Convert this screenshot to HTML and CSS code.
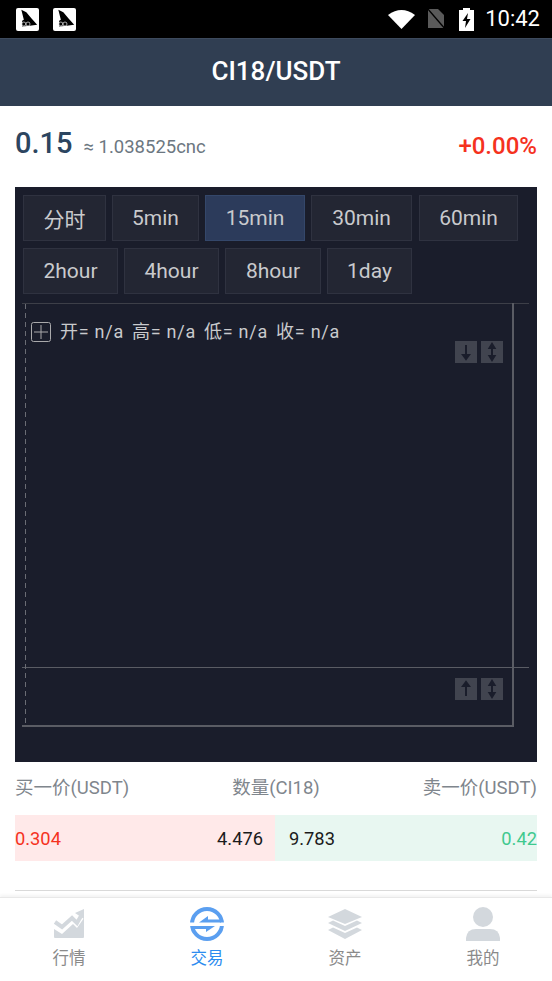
FILE: index.html
```html
<!DOCTYPE html>
<html lang="zh">
<head>
<meta charset="utf-8">
<title>CI18/USDT</title>
<link rel="stylesheet" href="styles.css">
</head>
<body>
<div class="app">
  <div class="status">
    <div class="status-left">
      <span class="note"><svg viewBox="0 0 24 24" width="20" height="20"><path d="M4 1 L10 4 L16 11 L23 19 L14 20 L5 21 L5 14 L7 13 Z" fill="#000"/><circle cx="7" cy="18" r="2.400" fill="#000" stroke="#fff" stroke-width=".8"/><circle cx="12" cy="18" r="2.400" fill="#000" stroke="#fff" stroke-width=".8"/></svg></span>
      <span class="note"><svg viewBox="0 0 24 24" width="20" height="20"><path d="M4 1 L10 4 L16 11 L23 19 L14 20 L5 21 L5 14 L7 13 Z" fill="#000"/><circle cx="7" cy="18" r="2.400" fill="#000" stroke="#fff" stroke-width=".8"/><circle cx="12" cy="18" r="2.400" fill="#000" stroke="#fff" stroke-width=".8"/></svg></span>
    </div>
    <div class="status-right">
      <svg class="wifi" viewBox="0 0 27 20" width="27" height="20"><path d="M0 6 Q13.500 -4 27 6 L13.500 20 Z" fill="#fff"/></svg>
      <svg class="sim" viewBox="0 0 20 22" width="20" height="22"><path d="M1 1 H11 L17 7 V20 H1 Z" fill="#5a5a5a"/><path d="M0 0 L19 22" stroke="#000" stroke-width="1.400"/></svg>
      <svg class="batt" viewBox="0 0 15 24" width="15" height="24"><path d="M4 1 H11 V3 H15 V24 H0 V3 H4 Z" fill="#fff"/><path d="M9 6 L3.500 14 H7 L6 21 L11.500 12 H8 Z" fill="#000"/></svg>
      <span class="clock">10:42</span>
    </div>
  </div>

  <header class="title">CI18/USDT</header>

  <section class="price-row">
    <div class="price-left">
      <span class="price">0.15</span>
      <span class="approx">≈ 1.038525cnc</span>
    </div>
    <span class="change">+0.00%</span>
  </section>

  <section class="chart">
    <div class="periods">
      <div class="period-row">
        <button class="btn w-fen">分时</button>
        <button class="btn w-5">5min</button>
        <button class="btn w-15 active">15min</button>
        <button class="btn w-30">30min</button>
        <button class="btn w-60">60min</button>
      </div>
      <div class="period-row">
        <button class="btn w-h">2hour</button>
        <button class="btn w-h">4hour</button>
        <button class="btn w-h8">8hour</button>
        <button class="btn w-d">1day</button>
      </div>
    </div>
    <div class="plot">
      <div class="line top-line"></div>
      <div class="line mid-line"></div>
      <div class="line bottom-line"></div>
      <div class="line right-line"></div>
      <div class="line dash-line"></div>
      <div class="legend">
        <svg class="plus" viewBox="0 0 20 20" width="20" height="20"><rect x=".5" y=".5" width="19" height="19" rx="2" fill="none" stroke="#a9a9ab"/><path d="M10 3 V17 M3 10 H17" stroke="#a9a9ab"/></svg>
        <span class="legend-text">开= n/a</span>
        <span class="legend-text">高= n/a</span>
        <span class="legend-text">低= n/a</span>
        <span class="legend-text">收= n/a</span>
      </div>
      <div class="zoom zoom-top">
        <span class="zbtn"><svg viewBox="0 0 22 22" width="22" height="22"><path d="M11 4 V15 M8 14 L11 18 L14 14 Z" stroke="#1a1d2b" stroke-width="2" fill="#1a1d2b"/></svg></span>
        <span class="zbtn"><svg viewBox="0 0 22 22" width="22" height="22"><path d="M11 5 V17 M8.500 7 L11 3 L13.500 7 Z M8.500 15 L11 19 L13.500 15 Z" stroke="#1a1d2b" stroke-width="2" fill="#1a1d2b"/></svg></span>
      </div>
      <div class="zoom zoom-bottom">
        <span class="zbtn"><svg viewBox="0 0 22 22" width="22" height="22"><path d="M11 7 V18 M8 8 L11 4 L14 8 Z" stroke="#1a1d2b" stroke-width="2" fill="#1a1d2b"/></svg></span>
        <span class="zbtn"><svg viewBox="0 0 22 22" width="22" height="22"><path d="M11 5 V17 M8.500 7 L11 3 L13.500 7 Z M8.500 15 L11 19 L13.500 15 Z" stroke="#1a1d2b" stroke-width="2" fill="#1a1d2b"/></svg></span>
      </div>
    </div>
  </section>

  <section class="book-head">
    <span>买一价(USDT)</span>
    <span>数量(CI18)</span>
    <span>卖一价(USDT)</span>
  </section>

  <section class="book">
    <div class="bid"><span class="bid-price">0.304</span><span>4.476</span></div>
    <div class="ask"><span>9.783</span><span class="ask-price">0.42</span></div>
  </section>

  <div class="divider"></div>

  <nav class="tabs">
    <div class="tab">
      <svg viewBox="0 0 34 34" width="34" height="34"><path d="M3 15 L10 20 L20 11 L25 16 L29 9" fill="none" stroke="#d3d8dd" stroke-width="4"/><path d="M23 6 L32 2 L32 12 Z" fill="#d3d8dd"/><path d="M2 22 L10 27 L21 17 L25 21 L32 11 V30 Q32 31 31 31 H3 Q2 31 2 30 Z" fill="#d3d8dd"/></svg>
      <span>行情</span>
    </div>
    <div class="tab on">
      <svg viewBox="0 0 34 34" width="34" height="34"><circle cx="17" cy="17" r="15" fill="none" stroke="#5b9ff0" stroke-width="4"/><rect x="0" y="15.500" width="34" height="3.500" fill="#fff"/><path d="M9 15.500 L18 9 V12.500 H31 V15.500 Z" fill="#5b9ff0"/><path d="M25 19 L16 25 V22 H3 V19 Z" fill="#5b9ff0"/></svg>
      <span>交易</span>
    </div>
    <div class="tab">
      <svg viewBox="0 0 34 34" width="34" height="34"><path d="M17 2 L34 10 L17 17 L0 10 Z" fill="#d3d8dd"/><path d="M5 13.500 L17 19 L29 13.500 L34 16 L17 24 L0 16 Z" fill="#d3d8dd"/><path d="M5 20.500 L17 26 L29 20.500 L34 23 L17 32 L0 23 Z" fill="#d3d8dd"/></svg>
      <span>资产</span>
    </div>
    <div class="tab">
      <svg viewBox="0 0 34 34" width="34" height="34"><circle cx="17" cy="10" r="10" fill="#d3d8dd"/><path d="M0 34 V31 Q1 22 10 22 H24 Q33 22 34 31 V34 Z" fill="#d3d8dd"/></svg>
      <span>我的</span>
    </div>
  </nav>
</div>
</body>
</html>
```
FILE: styles.css
```css
* { box-sizing: border-box; }
html, body { margin: 0; padding: 0; }
body { background: #fff; font-family: Roboto, "Noto Sans CJK SC", sans-serif; }
.app { width: 552px; height: 981px; overflow: hidden; display: flex; flex-direction: column; }

.status { height: 38px; background: #000; display: flex; justify-content: space-between; align-items: center; padding: 0 12px 0 16px; }
.status-left { display: flex; gap: 14px; }
.note { width: 23px; height: 23px; background: #fff; border-radius: 2px; display: flex; align-items: center; justify-content: center; }
.status-right { display: flex; align-items: center; }
.wifi { margin-right: 12px; }
.sim { margin-right: 12px; }
.batt { margin-right: 11px; }
.clock { color: #fff; font-size: 22px; line-height: 24px; }

.title { height: 68px; background: #303e52; border-top: 1px solid #3d4a5d; color: #fff; font-size: 26px; font-weight: 500; display: flex; align-items: center; justify-content: center; padding-bottom: 3px; }

.price-row { height: 81px; padding: 0 15px 8px 15px; display: flex; justify-content: space-between; align-items: center; }
.price-left { display: flex; align-items: baseline; gap: 11px; }
.price { font-size: 29px; font-weight: 500; color: #2c4560; }
.approx { font-size: 18.500px; color: #6c7781; }
.change { font-size: 24px; font-weight: 500; color: #f5321e; margin-top: 6px; }

.chart { height: 575px; margin: 0 15px; background: #1a1d2b; padding: 8px; display: flex; flex-direction: column; }
.periods { display: flex; flex-direction: column; gap: 7px; }
.period-row { display: flex; gap: 6px; }
.btn { height: 46px; padding: 0; background: #232633; border: 1px solid #2f3240; color: #c9cacd; font-family: inherit; font-size: 21px; }
.btn.active { background: #2c3b5b; border-color: #34476a; }
.w-fen { width: 83px; }
.w-5 { width: 87px; }
.w-15 { width: 100px; }
.w-30 { width: 101px; margin-right: 1px; }
.w-60 { width: 99px; }
.w-h { width: 95px; }
.w-h8 { width: 96px; }
.w-d { width: 85px; }

.plot { position: relative; flex: 1; }
.line { position: absolute; background: #5a5c64; }
.top-line { left: -1px; top: 9px; width: 507px; height: 1px; background: #3d3f48; }
.mid-line { left: -1px; top: 373px; width: 507px; height: 1px; }
.bottom-line { left: -1px; top: 431px; width: 491px; height: 2px; }
.right-line { left: 489px; top: 9px; width: 2px; height: 424px; }
.dash-line { left: 2px; top: 10px; width: 1px; height: 422px; background: repeating-linear-gradient(to bottom, #6a6c74 0 5px, transparent 5px 9px); }

.legend { position: absolute; left: 8px; top: 28px; display: flex; align-items: center; gap: 8px; color: #c9cacd; font-size: 18px; line-height: 20px; white-space: nowrap; }
.plus { margin-right: 1px; }
.legend-text { letter-spacing: .75px; }

.zoom { position: absolute; left: 432px; display: flex; gap: 4px; }
.zoom-top { top: 47px; }
.zoom-bottom { top: 384px; }
.zbtn { width: 22px; height: 22px; background: #41444f; display: block; }
.zbtn svg { display: block; }

.book-head { height: 53px; padding: 0 15px 5px; display: flex; justify-content: space-between; align-items: center; color: #7f868d; font-size: 18.500px; }

.book { height: 46px; margin: 0 15px; display: flex; font-size: 18.300px; color: #1b1b1b; }
.bid { width: 260px; background: #ffe9e9; display: flex; justify-content: space-between; align-items: center; padding-right: 12px; }
.ask { flex: 1; background: #e8f7f1; display: flex; justify-content: space-between; align-items: center; padding-left: 14px; }
.bid-price { color: #f5321e; }
.ask-price { color: #3fc98f; }

.divider { height: 1px; margin: 29px 15px 0; background: #d9d9d9; }

.tabs { margin-top: 6px; flex: 1; display: flex; background: #fff; border-top: 1px solid #e8e8e8; box-shadow: 0 -2px 3px rgba(0,0,0,.05); }
.tab { width: 138px; display: flex; flex-direction: column; align-items: center; padding-top: 9px; color: #8a8a8a; font-size: 16.500px; line-height: 20px; gap: 8px; }
.tab svg { display: block; }
.tab.on { color: #2d8cf0; }
```
